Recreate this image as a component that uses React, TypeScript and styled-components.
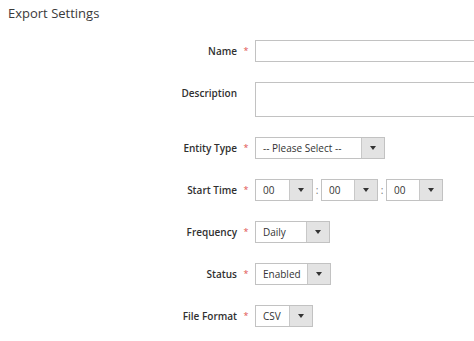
import React from "react";
import styled, { createGlobalStyle } from "styled-components";

const GlobalStyle = createGlobalStyle`
  html, body {
    margin: 0;
    padding: 0;
    background: #ffffff;
    overflow: hidden;
  }
  body {
    font-family: "Open Sans", "Noto Sans", "Liberation Sans", sans-serif;
    color: #303030;
  }
`;

const Page = styled.div`
  width: 474px;
  height: 341px;
  overflow: hidden;
  padding: 4px 0 0 8px;
  box-sizing: border-box;
`;

const Title = styled.h2`
  margin: 0;
  font-size: 13px;
  line-height: 18px;
  font-weight: 500;
  color: #3a3a3a;
`;

const Form = styled.div`
  display: flex;
  flex-direction: column;
  gap: 20px;
  margin-top: 18px;
`;

const Row = styled.div`
  display: flex;
  align-items: flex-start;
  & > * {
    flex-shrink: 0;
  }
`;

const Label = styled.label`
  width: 229px;
  text-align: right;
  font-size: 10px;
  line-height: 22px;
  font-weight: 600;
  color: #303030;
`;

const Mark = styled.span<{ $on: boolean }>`
  width: 18px;
  text-align: center;
  font-size: 9px;
  line-height: 22px;
  color: #e05050;
  visibility: ${(p) => (p.$on ? "visible" : "hidden")};
`;

const TextInput = styled.div`
  width: 240px;
  height: 22px;
  box-sizing: border-box;
  border: 1px solid #c2c2c2;
  background: #fff;
`;

const TextArea = styled(TextInput)`
  height: 35px;
`;

const SelectBox = styled.div<{ $w: number }>`
  display: flex;
  width: ${(p) => p.$w}px;
  height: 22px;
  box-sizing: border-box;
  border: 1px solid #c2c2c2;
  background: #fff;
`;

const SelectValue = styled.span`
  flex: 1;
  padding-left: 7px;
  font-size: 10px;
  line-height: 20px;
  color: #333;
  white-space: nowrap;
`;

const Arrow = styled.span`
  width: 22px;
  display: flex;
  align-items: center;
  justify-content: center;
  background: #e3e3e3;
  border-left: 1px solid #c8c8c8;
  &::after {
    content: "";
    border-left: 3px solid transparent;
    border-right: 3px solid transparent;
    border-top: 4px solid #333;
  }
`;

const TimeGroup = styled.div`
  display: flex;
  align-items: center;
`;

const Colon = styled.span`
  width: 8px;
  text-align: center;
  font-size: 10px;
  line-height: 22px;
  color: #777;
`;

function Select({ value, width }: { value: string; width: number }) {
  return (
    <SelectBox $w={width}>
      <SelectValue>{value}</SelectValue>
      <Arrow />
    </SelectBox>
  );
}

export default function App() {
  return (
    <>
      <GlobalStyle />
      <Page>
        <Title>Export Settings</Title>
        <Form>
          <Row>
            <Label>Name</Label>
            <Mark $on>*</Mark>
            <TextInput />
          </Row>
          <Row>
            <Label>Description</Label>
            <Mark $on={false}>*</Mark>
            <TextArea />
          </Row>
          <Row>
            <Label>Entity Type</Label>
            <Mark $on>*</Mark>
            <Select value="-- Please Select --" width={130} />
          </Row>
          <Row>
            <Label>Start Time</Label>
            <Mark $on>*</Mark>
            <TimeGroup>
              <Select value="00" width={58} />
              <Colon>:</Colon>
              <Select value="00" width={57} />
              <Colon>:</Colon>
              <Select value="00" width={57} />
            </TimeGroup>
          </Row>
          <Row>
            <Label>Frequency</Label>
            <Mark $on>*</Mark>
            <Select value="Daily" width={75} />
          </Row>
          <Row>
            <Label>Status</Label>
            <Mark $on>*</Mark>
            <Select value="Enabled" width={76} />
          </Row>
          <Row>
            <Label>File Format</Label>
            <Mark $on>*</Mark>
            <Select value="CSV" width={58} />
          </Row>
        </Form>
      </Page>
    </>
  );
}
